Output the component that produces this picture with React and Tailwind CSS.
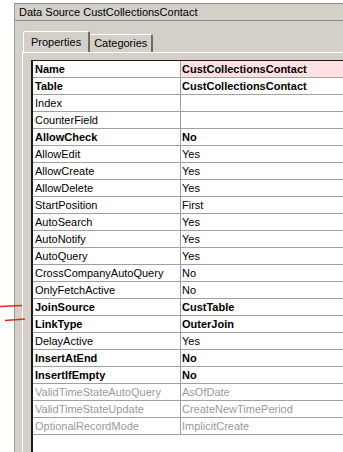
import React from "react";

const rows = [
  { name: "Name", value: "CustCollectionsContact", bold: true, pink: true },
  { name: "Table", value: "CustCollectionsContact", bold: true },
  { name: "Index", value: "" },
  { name: "CounterField", value: "" },
  { name: "AllowCheck", value: "No", bold: true },
  { name: "AllowEdit", value: "Yes" },
  { name: "AllowCreate", value: "Yes" },
  { name: "AllowDelete", value: "Yes" },
  { name: "StartPosition", value: "First" },
  { name: "AutoSearch", value: "Yes" },
  { name: "AutoNotify", value: "Yes" },
  { name: "AutoQuery", value: "Yes" },
  { name: "CrossCompanyAutoQuery", value: "No" },
  { name: "OnlyFetchActive", value: "No" },
  { name: "JoinSource", value: "CustTable", bold: true },
  { name: "LinkType", value: "OuterJoin", bold: true },
  { name: "DelayActive", value: "Yes" },
  { name: "InsertAtEnd", value: "No", bold: true },
  { name: "InsertIfEmpty", value: "No", bold: true },
  { name: "ValidTimeStateAutoQuery", value: "AsOfDate", dim: true },
  { name: "ValidTimeStateUpdate", value: "CreateNewTimePeriod", dim: true },
  { name: "OptionalRecordMode", value: "ImplicitCreate", dim: true },
];

const PropertyRow = ({ row }) => {
  const text = row.dim
    ? "text-[#9a9a9a]"
    : row.bold
    ? "font-bold text-black"
    : "text-black";
  return (
    <div className="flex h-[17px] border-b border-[#a0a0a0]">
      <div className={`w-[148px] shrink-0 pl-[2px] leading-[16px] border-r border-[#a0a0a0] ${text}`}>
        {row.name}
      </div>
      <div
        className={`flex-1 pl-[1px] leading-[16px] whitespace-nowrap ${text} ${
          row.pink ? "bg-[#ffe1e1]" : ""
        }`}
      >
        {row.value}
      </div>
    </div>
  );
};

export default function App() {
  return (
    <div
      className="relative w-[343px] h-[452px] bg-white overflow-hidden flex pt-[3px] pl-[14px] text-[11px]"
      style={{ fontFamily: '"Liberation Sans", Arial, sans-serif' }}
    >
      <div className="flex-1 flex flex-col bg-[#d4d0c8] border-l border-[#9c9a94]">
        <div className="h-[18px] shrink-0 border-t border-b border-[#8f8d88] pl-[4px] leading-[16px] text-black whitespace-nowrap">
          Data Source CustCollectionsContact
        </div>

        <div className="h-[31px] shrink-0 flex items-end pl-[8px]">
          <div className="h-[21px] px-[7px] pt-[2px] border-t border-l border-white border-r-2 border-r-[#6e6c68] rounded-t-[2px] leading-[16px] text-black">
            Properties
          </div>
          <div className="h-[18px] px-[4px] border-t border-white border-r-2 border-r-[#6e6c68] rounded-t-[2px] leading-[17px] text-black">
            Categories
          </div>
        </div>

        <div className="flex-1 ml-[7px] border-t border-l border-white pt-[7px] pl-[8px] flex">
          <div className="flex-1 bg-white border-l-2 border-t border-[#1a1a1a]">
            {rows.map((row) => (
              <PropertyRow key={row.name} row={row} />
            ))}
          </div>
        </div>
      </div>

      <svg
        className="absolute left-0 top-[300px]"
        width="30"
        height="26"
        viewBox="0 0 30 26"
      >
        <path d="M0 6.5 L22 5.5" stroke="#e8231f" strokeWidth="1.6" fill="none" />
        <path d="M5 20.5 L15 19.8 L25 19" stroke="#e8231f" strokeWidth="1.6" fill="none" />
      </svg>
    </div>
  );
}
